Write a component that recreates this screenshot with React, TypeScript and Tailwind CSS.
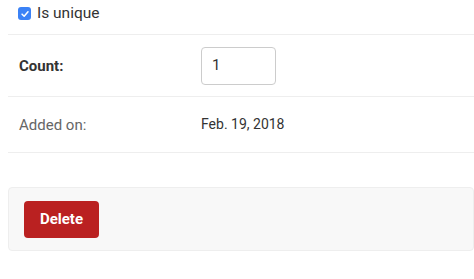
import React from "react";

export default function App() {
  return (
    <div className="w-[474px] h-[279px] bg-white overflow-hidden font-['Roboto',sans-serif] text-[#333]">
      <div className="pl-[8px]">
        <div className="h-[35px] border-b border-[#eee] pl-[10px] flex items-start pt-[2px]">
          <label className="flex items-center gap-[6px] text-[15.5px] text-[#333]">
            <span className="w-[13px] h-[13px] rounded-[3px] bg-[#3b82f6] flex items-center justify-center">
              <svg viewBox="0 0 12 12" className="w-[10px] h-[10px]">
                <path d="M2.5 6.2 L5 8.6 L9.6 3.4" fill="none" stroke="white" strokeWidth="1.8" strokeLinecap="round" strokeLinejoin="round" />
              </svg>
            </span>
            Is unique
          </label>
        </div>
        <div className="h-[62px] border-b border-[#eee] pl-[11px] flex items-center">
          <div className="w-[182px] text-[15px] font-bold text-[#333] pt-[1px]">Count:</div>
          <div className="w-[75px] h-[38px] border border-[#ccc] rounded-[4px] flex items-center pl-[10px] text-[15px] text-[#333]">1</div>
        </div>
        <div className="h-[56px] border-b border-[#eee] pl-[11px] flex items-center">
          <div className="w-[182px] text-[15px] text-[#666] pt-[2px]">Added on:</div>
          <div className="text-[14px] text-[#333] -mt-[1px]">Feb. 19, 2018</div>
        </div>
        <div className="mt-[34px] h-[64px] bg-[#f8f8f8] border border-[#eee] rounded-[4px] pl-[15px] flex items-center">
          <button className="w-[75px] h-[37px] bg-[#ba2121] rounded-[4px] text-white text-[15px] font-bold">Delete</button>
        </div>
      </div>
    </div>
  );
}
